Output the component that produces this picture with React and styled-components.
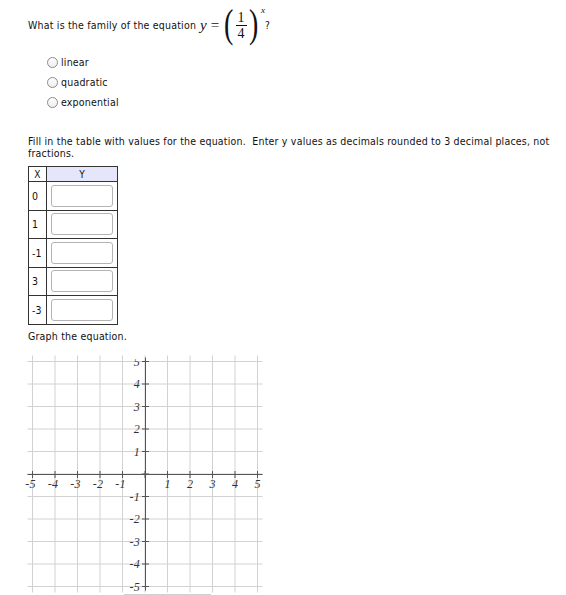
import React from 'react';
import styled, { createGlobalStyle } from 'styled-components';

const Global = createGlobalStyle`
  html, body { margin: 0; padding: 0; background: #fff; }
  body {
    font-family: "DejaVu Sans Condensed", "DejaVu Sans", sans-serif;
    font-size: 10.5px;
    letter-spacing: 0.2px;
    color: #111;
  }
`;

const Page = styled.div`
  width: 566px;
  height: 595px;
  overflow: hidden;
  box-sizing: border-box;
  padding: 7px 0 0 28px;
`;

const Question = styled.div`
  display: flex;
  align-items: center;
  height: 36px;
`;

const MathBox = styled.span`
  display: inline-flex;
  align-items: center;
  margin-left: 4px;
  font-family: "Liberation Serif", serif;
  letter-spacing: 0;
  height: 36px;
`;

const MathVar = styled.span`
  font-style: italic;
  font-size: 15px;
`;

const MathOp = styled.span`
  font-size: 15px;
  margin: 0 4px 0 4px;
`;

const Paren = styled.span`
  font-size: 40px;
  line-height: 36px;
  display: inline-block;
  transform: scaleX(0.7);
  margin: -3px -1px 0;
`;

const Frac = styled.span`
  display: inline-flex;
  flex-direction: column;
  align-items: center;
  font-size: 14px;
  line-height: 15px;
  margin: 0 1px;
`;

const FracBar = styled.span`
  width: 11px;
  height: 1px;
  background: #111;
`;

const Sup = styled.span`
  align-self: flex-start;
  font-style: italic;
  font-size: 9px;
  line-height: 9px;
  margin: -1px 0 0 2px;
`;

const Tail = styled.span`
  font-size: 10px;
`;

const Options = styled.div`
  display: flex;
  flex-direction: column;
  margin: 9px 0 0 19px;
`;

const Option = styled.label`
  display: flex;
  align-items: center;
  height: 20px;
  gap: 3px;
`;

const Radio = styled.span`
  width: 9px;
  height: 9px;
  border: 1px solid #8a8a8a;
  border-radius: 50%;
  background: linear-gradient(#fff, #eee);
`;

const Instructions = styled.p`
  margin: 23px 0 0 0;
  width: 524px;
  line-height: 12px;
`;

const Table = styled.table`
  margin-top: 7px;
  border-collapse: collapse;
  border: 1px solid #333;
`;

const HeadCell = styled.th`
  border: 1px solid #333;
  height: 14px;
  padding: 0;
  font-weight: normal;
  font-size: 10px;
  width: ${(p) => p.$w}px;
  background: ${(p) => (p.$tinted ? '#e6e6fa' : '#fff')};
`;

const XCell = styled.td`
  border: 1px solid #333;
  height: 27.5px;
  padding: 0 0 0 3px;
  text-align: left;
`;

const YCell = styled.td`
  border: 1px solid #333;
  padding: 0 0 0 4px;
`;

const Field = styled.input`
  display: block;
  width: 62px;
  height: 22px;
  box-sizing: border-box;
  border: 1px solid #b4b4b4;
  border-radius: 3px;
  background: #fff;
  padding: 0;
`;

const GraphLabel = styled.div`
  margin-top: 5px;
  font-size: 10.5px;
  line-height: 12px;
`;

const Chart = styled.svg`
  display: block;
  margin: 4px 0 0 -4px;
`;

const Rule = styled.div`
  width: 87px;
  border-top: 1px solid #cfcfcf;
  margin-left: 96px;
`;

const xs = [0, 1, -1, 3, -3];

function Graph() {
  const ox = 121;
  const oy = 128;
  const u = 22.5;
  const idx = [-5, -4, -3, -2, -1, 0, 1, 2, 3, 4, 5];
  const top = oy - 5 * u;
  const bottom = oy + 5 * u;
  const left = ox - 5 * u;
  const right = ox + 5 * u;
  return (
    <Chart width="242" height="248" viewBox="0 0 242 248">
      <defs>
        <clipPath id="gclip">
          <rect x="0" y="13" width="242" height="235" />
        </clipPath>
      </defs>
      <g stroke="#d2d2d2" strokeWidth="1">
        {idx.map((i) => (
          <line key={'v' + i} x1={ox + i * u} x2={ox + i * u} y1={top - 6} y2={bottom + 6} />
        ))}
        {idx.map((i) => (
          <line key={'h' + i} x1={left - 5} x2={right + 5} y1={oy + i * u} y2={oy + i * u} />
        ))}
      </g>
      <g stroke="#555" strokeWidth="1">
        <line x1={left - 5} x2={right + 5} y1={oy + 0.5} y2={oy + 0.5} />
        <line x1={ox + 0.5} x2={ox + 0.5} y1={top - 4} y2={bottom + 4} />
        {idx.map((i) => (
          <line key={'tx' + i} x1={ox + i * u} x2={ox + i * u} y1={oy - 3} y2={oy + 4} />
        ))}
        {idx.map((i) => (
          <line key={'ty' + i} x1={ox - 3} x2={ox + 4} y1={oy + i * u} y2={oy + i * u} />
        ))}
      </g>
      <g
        fontFamily="Liberation Serif, serif"
        fontStyle="italic"
        fontSize="12"
        fill="#333"
        clipPath="url(#gclip)"
      >
        {idx
          .filter((i) => i !== 0)
          .map((i) => (
            <text key={'lx' + i} x={ox + i * u - (i < 0 ? 2 : 0)} y={oy + 14} textAnchor="middle">
              {i < 0 ? '-' + -i : String(i)}
            </text>
          ))}
        {idx
          .filter((i) => i !== 0)
          .map((i) => (
            <text key={'ly' + i} x={ox - 5} y={oy - i * u + 4} textAnchor="end">
              {i < 0 ? '-' + -i : String(i)}
            </text>
          ))}
      </g>
    </Chart>
  );
}

export default function App() {
  return (
    <Page>
      <Global />
      <Question>
        <span>What is the family of the equation</span>
        <MathBox>
          <MathVar>y</MathVar>
          <MathOp>=</MathOp>
          <Paren>(</Paren>
          <Frac>
            <span>1</span>
            <FracBar />
            <span>4</span>
          </Frac>
          <Paren>)</Paren>
          <Sup>x</Sup>
        </MathBox>
        <Tail>?</Tail>
      </Question>
      <Options>
        {['linear', 'quadratic', 'exponential'].map((o) => (
          <Option key={o}>
            <Radio />
            <span>{o}</span>
          </Option>
        ))}
      </Options>
      <Instructions>
        Fill in the table with values for the equation.&nbsp; Enter y values as decimals rounded to 3
        decimal places, not fractions.
      </Instructions>
      <Table>
        <thead>
          <tr>
            <HeadCell $w={17}>X</HeadCell>
            <HeadCell $w={70} $tinted>
              Y
            </HeadCell>
          </tr>
        </thead>
        <tbody>
          {xs.map((x) => (
            <tr key={x}>
              <XCell>{x}</XCell>
              <YCell>
                <Field type="text" />
              </YCell>
            </tr>
          ))}
        </tbody>
      </Table>
      <GraphLabel>Graph the equation.</GraphLabel>
      <Graph />
      <Rule />
    </Page>
  );
}
